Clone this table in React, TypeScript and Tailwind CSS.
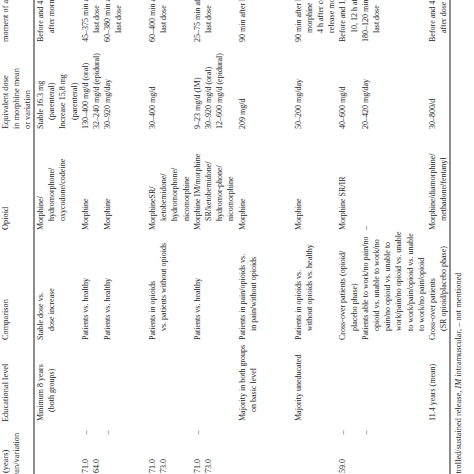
type Entry = string[];

type Row = {
  h: string;
  age?: string[];
  dash?: boolean;
  edu?: Entry[];
  comp?: Entry[];
  opioid?: Entry[];
  dose?: Entry[];
  time?: Entry[];
};

const rows: Row[] = [
  {
    h: 'h-[44.8px]',
    edu: [['Minimum 8 years', '(both groups)']],
    comp: [['Stable dose vs.', 'dose increase']],
    opioid: [['Morphine/', 'hydromorphone/', 'oxycodone/codeine']],
    dose: [
      ['Stable 16.3 mg', '(parenteral)'],
      ['Increase 15,8 mg', '(parenteral)'],
    ],
    time: [['Before and 45 min', 'after morning dose']],
  },
  {
    h: 'h-[22.4px]',
    age: ['71.0', '64.0'],
    dash: true,
    comp: [['Patients vs. healthy']],
    opioid: [['Morphine']],
    dose: [['130–400 mg/d (oral)'], ['32–240 mg/d (epidural)']],
    time: [['45–375 min after', 'last dose']],
  },
  {
    h: 'h-[44.8px]',
    dash: true,
    comp: [['Patients vs. healthy']],
    opioid: [['Morphine']],
    dose: [['30–920 mg/day']],
    time: [['60–380 min after', 'last dose']],
  },
  {
    h: 'h-[44.8px]',
    age: ['71.0', '73.0'],
    comp: [['Patients in opioids', 'vs. patients without opioids']],
    opioid: [['MorphineSR/', 'ketobemidone/', 'hydromorphone/', 'nicomorphine']],
    dose: [['30–400 mg/d']],
    time: [['60–400 min after', 'last dose']],
  },
  {
    h: 'h-[44.8px]',
    age: ['71.0', '73.0'],
    dash: true,
    comp: [['Patients vs. healthy']],
    opioid: [['Morphine IM/morphine', 'SR/ketobemidone/', 'hydromor-phone/', 'nicomorphine']],
    dose: [['9–23 mg/d (IM)'], ['30–920 mg/d (oral)'], ['12–600 mg/d (epidural)']],
    time: [['25–75 min after', 'last dose']],
  },
  {
    h: 'h-[56px]',
    edu: [['Majority in both groups', 'on basic level']],
    comp: [['Patients in pain/opioids vs.', 'in pain/without opioids']],
    opioid: [['Morphine']],
    dose: [['209 mg/d']],
    time: [['90 min after last dose']],
  },
  {
    h: 'h-[44.8px]',
    edu: [['Majority uneducated']],
    comp: [['Patients in opioids vs.', 'without opioids vs. healthy']],
    opioid: [['Morphine']],
    dose: [['50–200 mg/day']],
    time: [['90 min after last dose of', 'morphine solution', '4 h after controlled', 'release morphine']],
  },
  {
    h: 'h-[22.4px]',
    age: ['59.0'],
    dash: true,
    comp: [['Cross-over patients (opioid/', 'placebo phase)']],
    opioid: [['Morphine SR/IR']],
    dose: [['40–600 mg/d']],
    time: [['Before and 1, 2, 4,', '10, 12 h after dose']],
  },
  {
    h: 'h-[67.2px]',
    dash: true,
    comp: [
      [
        'Patients able to work/no pain/no',
        'opioid vs. unable to work/no',
        'pain/no opioid vs. unable to',
        'work/pain/no opioid vs. unable',
        'to work/pain/opioid vs. unable',
        'to work/no pain/opioid',
      ],
    ],
    opioid: [['–']],
    dose: [['20–420 mg/day']],
    time: [['180–120 min after', 'last dose']],
  },
  {
    h: 'h-[22.4px]',
    edu: [['11.4 years (mean)']],
    comp: [['Cross-over patients', '(SR opioid/placebo phase)']],
    opioid: [['Morphine/diamorphine/', 'methadone/fentanyl']],
    dose: [['30–800/d']],
    time: [['Before and 45 min', 'after dose']],
  },
];

function Cell({ entries, className }: { entries?: Entry[]; className: string }) {
  return (
    <div className={className}>
      {entries?.map((lines, i) => (
        <div key={i} className="pl-[9px] -indent-[9px]">
          {lines.map((line, j) => (
            <span key={j}>
              {line}
              {j < lines.length - 1 && <br />}
            </span>
          ))}
        </div>
      ))}
    </div>
  );
}

export default function App() {
  return (
    <div className="h-[474px] w-[474px] overflow-hidden bg-white">
      {/* the page is printed sideways: lay it out upright, then turn it */}
      <div className="h-[474px] w-[474px] -rotate-90">
        <div className="ml-[-16px] mt-[-1px] w-[600px] whitespace-nowrap font-['Liberation_Serif',serif] text-[8px] leading-[11.2px] text-[#262626]">
          {/* header */}
          <div className="flex h-[33px] text-[8.4px]">
            <div className="w-[67px]">
              <div>Age (years)</div>
              <div className="pl-[6px]">mean/variation</div>
            </div>
            <div className="w-[82px]">Educational level</div>
            <div className="w-[110px]">Comparison</div>
            <div className="w-[101px]">Opioid</div>
            <div className="w-[87px]">
              <div>Equivalent dose</div>
              <div>in morphine mean</div>
              <div>or variation</div>
            </div>
            <div className="w-[150px]">moment of assessment</div>
          </div>
          <div className="h-[2px] w-[600px] bg-[#8c8c8c]" />

          {/* body */}
          {rows.map((r, i) => (
            <div key={i} className={`flex ${r.h}`}>
              <div className="flex w-[67px]">
                <div className="w-[46px] pl-[16px]">
                  {r.age?.map((a, j) => (
                    <div key={j}>{a}</div>
                  ))}
                </div>
                <div className="w-[21px] text-center">{r.dash ? '–' : ''}</div>
              </div>
              <Cell entries={r.edu} className="w-[82px] pl-[1px]" />
              <Cell entries={r.comp} className="w-[110px]" />
              <Cell entries={r.opioid} className="w-[101px]" />
              <Cell entries={r.dose} className="w-[87px]" />
              <Cell entries={r.time} className="w-[150px]" />
            </div>
          ))}

          <div className="h-[2px] w-[600px] bg-[#8c8c8c]" />
          <div className="ml-[-8px] pt-[2px] text-[8.4px]">
            <i>SR</i> controlled/sustained release, <i>IM</i> intramuscular, – not mentioned
          </div>
        </div>
      </div>
    </div>
  );
}
